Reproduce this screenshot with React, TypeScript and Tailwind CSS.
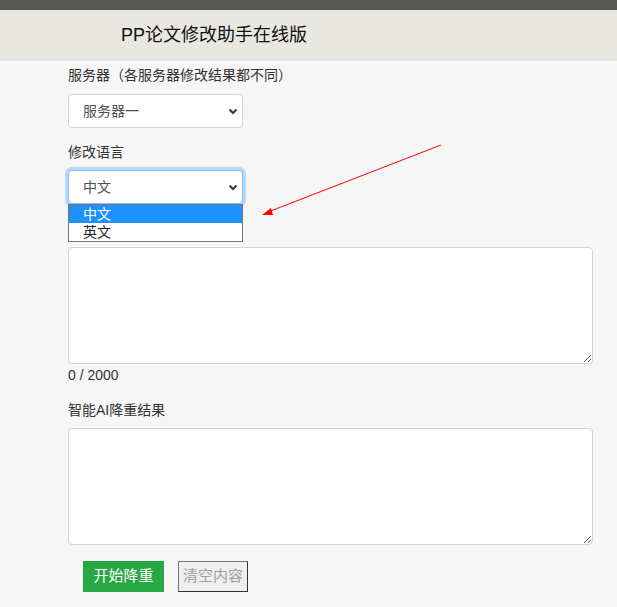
import React from 'react';

const cjk = { fontFamily: '"Liberation Sans", "Noto Sans CJK SC", sans-serif' };

const Chevron: React.FC = () => (
  <svg width="10" height="8" viewBox="0 0 10 8" className="absolute right-[4px] top-1/2 -translate-y-1/2 text-[#343a40]">
    <path d="M1.5 2.5 L5 6 L8.5 2.5" fill="none" stroke="currentColor" strokeWidth="2" />
  </svg>
);

export default function App() {
  return (
    <div className="relative w-[617px] h-[607px] overflow-hidden bg-[#f6f6f6] text-[#333]" style={cjk}>
      {/* Top strip */}
      <div className="h-[10px] bg-[#565853]" />

      {/* Header */}
      <header className="h-[51px] bg-[#e8e7e0] flex items-center pl-[121px]">
        <h1 className="text-[18px] text-[#111]">PP论文修改助手在线版</h1>
      </header>

      {/* Form */}
      <main className="pl-[68px] w-[593px] text-[14px]">
        <div className="mt-[4px] leading-[20px]">服务器（各服务器修改结果都不同）</div>
        <div className="relative mt-[9px] w-[175px] h-[34px] bg-white border border-[#ced4da] rounded-[4px] flex items-center pl-[14px] text-[#495057]">
          服务器一
          <Chevron />
        </div>

        <div className="mt-[14px] leading-[20px]">修改语言</div>
        <div className="relative mt-[8px] w-[175px]">
          <div className="relative h-[34px] bg-white border border-[#80bdff] rounded-[4px] flex items-center pl-[14px] text-[#495057] shadow-[0_0_0_3px_rgba(0,123,255,0.25)]">
            中文
            <Chevron />
          </div>
          {/* Open dropdown list */}
          <div className="absolute left-0 top-[34px] z-10 w-[175px] bg-white border border-[#767676] text-[14px] leading-[18px]">
            <div className="bg-[#1e90ff] text-white pl-[14px]">中文</div>
            <div className="text-[#222] pl-[14px]">英文</div>
          </div>
        </div>

        {/* label row hidden under the open list */}
        <div className="mt-[9px] h-[20px]" />
        <textarea className="block mt-[14px] w-[525px] h-[117px] bg-white border border-[#ced4da] rounded-[4px] outline-none" />
        <div className="mt-[1px] leading-[20px]">0 / 2000</div>

        <div className="mt-[15px] leading-[20px]">智能AI降重结果</div>
        <textarea className="block mt-[8px] w-[525px] h-[117px] bg-white border border-[#ced4da] rounded-[4px] outline-none" />

        <div className="mt-[16px] ml-[15px] flex gap-[14px]">
          <button className="w-[81px] h-[31px] bg-[#28a745] text-white text-[15px]">开始降重</button>
          <button className="w-[70px] h-[31px] bg-[#efefef] border border-[#767676] border-r-[#333] border-b-[#333] text-[#a0a0a0] text-[15px]">
            清空内容
          </button>
        </div>
      </main>

      {/* Annotation arrow */}
      <svg className="absolute left-0 top-0 pointer-events-none" width="617" height="607">
        <line x1="441" y1="145" x2="268" y2="212" stroke="#ff0000" strokeWidth="1" />
        <polygon points="262,215 271,208 273,215" fill="#ff0000" />
      </svg>
    </div>
  );
}
